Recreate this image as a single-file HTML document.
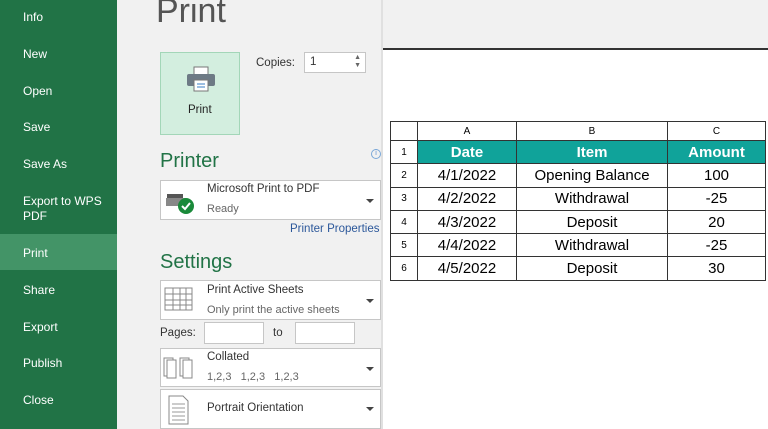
<!DOCTYPE html><html><head><meta charset="utf-8"><style>
*{margin:0;padding:0;box-sizing:border-box}
body{width:768px;height:429px;overflow:hidden;font-family:"Liberation Sans",sans-serif;background:#fff;position:relative}
.a{position:absolute}
.side{left:0;top:0;width:117px;height:429px;background:#217346}
.side div{position:absolute;left:23px;color:#fff;font-size:12px}
.mid{left:117px;top:0;width:265px;height:429px;background:#f1f1f1}
.box{position:absolute;background:#fff;border:1px solid #c6c6c6}
.arr{position:absolute;right:6px;width:0;height:0;border-left:4px solid transparent;border-right:4px solid transparent;border-top:4px solid #444}
.t{font-size:11.5px;color:#333;position:absolute}
.s{font-size:11px;color:#666;position:absolute}
table{border-collapse:collapse;position:absolute;left:390px;top:121px;font-family:"Liberation Sans",sans-serif}
td{border:1px solid #333;text-align:center;font-size:15px;color:#000;padding:0;height:23.3px}
td.h{font-size:10px;height:19px}
tr.g td.c{background:#10a39a;color:#fff;font-weight:bold}
</style></head><body>
<div class="a side">
<div style="top:10px">Info</div><div style="top:47px">New</div><div style="top:84px">Open</div><div style="top:120px">Save</div><div style="top:157px">Save As</div>
<div style="top:194px;line-height:15px">Export to WPS<br>PDF</div>
<div style="left:0;top:234px;width:117px;height:36px;background:#439467"></div>
<div style="top:246px">Print</div><div style="top:283px">Share</div><div style="top:320px">Export</div><div style="top:356px">Publish</div><div style="top:393px">Close</div>
</div>
<div class="a mid">
<div class="a" style="left:39px;top:-8px;font-size:34px;color:#555">Print</div>
<div class="a" style="left:43px;top:52px;width:80px;height:83px;background:#d3eedf;border:1px solid #a3d6b8">
<svg class="a" style="left:25px;top:13px" width="30" height="26"><rect x="8" y="1" width="14" height="8" fill="#fff" stroke="#777"/><rect x="1" y="8" width="28" height="12" rx="2" fill="#6d7a85"/><rect x="8" y="14" width="14" height="11" fill="#fff" stroke="#777"/><line x1="11" y1="18" x2="19" y2="18" stroke="#3a7cc4"/><line x1="11" y1="21" x2="19" y2="21" stroke="#3a7cc4"/></svg>
<div class="a" style="left:27px;top:51px;font-size:11.5px;color:#222">Print</div></div>
<div class="t" style="left:139px;top:57px">Copies:</div>
<div class="box" style="left:187px;top:52px;width:62px;height:21px"><span class="t" style="left:5px;top:3px">1</span><span class="a" style="right:4px;top:1px;font-size:7px;color:#666;line-height:8px">▲<br>▼</span></div>
<div class="a" style="left:43px;top:150px;font-size:20px;color:#217346">Printer</div>
<div class="a" style="left:254px;top:149px;width:10px;height:10px;border:1px solid #7aa8d8;border-radius:50%;font-size:7px;color:#5a8fd0;text-align:center;line-height:8px">i</div>
<div class="box" style="left:43px;top:180px;width:221px;height:40px">
<svg class="a" style="left:4px;top:10px" width="32" height="24"><rect x="2" y="3" width="16" height="9" fill="#555"/><rect x="1" y="7" width="20" height="8" fill="#888"/><circle cx="21" cy="15" r="8" fill="#1a8a3a"/><path d="M17 15l3 3 5-6" stroke="#fff" stroke-width="2" fill="none"/></svg>
<div class="t" style="left:46px;top:2px">Microsoft Print to PDF</div><div class="s" style="left:46px;top:22px">Ready</div><div class="arr" style="top:18px"></div></div>
<div class="a" style="left:173px;top:223px;font-size:11.5px;color:#2b579a">Printer Properties</div>
<div class="a" style="left:43px;top:251px;font-size:20px;color:#217346">Settings</div>
<div class="box" style="left:43px;top:280px;width:221px;height:40px">
<svg class="a" style="left:3px;top:6px" width="30" height="26"><g stroke="#888" fill="none"><rect x="1" y="1" width="27" height="22"/><path d="M1 7h27M1 13h27M1 18h27M9 1v22M16 1v22M22 1v22"/></g></svg>
<div class="t" style="left:46px;top:3px">Print Active Sheets</div><div class="s" style="left:46px;top:23px">Only print the active sheets</div><div class="arr" style="top:18px"></div></div>
<div class="t" style="left:43px;top:327px">Pages:</div>
<div class="box" style="left:87px;top:322px;width:60px;height:22px"></div>
<div class="t" style="left:156px;top:327px">to</div>
<div class="box" style="left:178px;top:322px;width:60px;height:22px"></div>
<div class="box" style="left:43px;top:348px;width:221px;height:39px">
<svg class="a" style="left:2px;top:8px" width="36" height="22"><g stroke="#888" fill="#fff"><rect x="1" y="1" width="9" height="18"/><rect x="4" y="3" width="9" height="18"/><rect x="17" y="1" width="9" height="18"/><rect x="20" y="3" width="9" height="18"/></g></svg>
<div class="t" style="left:46px;top:2px">Collated</div><div class="s" style="left:46px;top:22px">1,2,3 &nbsp;&nbsp;1,2,3 &nbsp;&nbsp;1,2,3</div><div class="arr" style="top:18px"></div></div>
<div class="box" style="left:43px;top:389px;width:221px;height:40px">
<svg class="a" style="left:7px;top:5px" width="22" height="30"><path d="M1 1h14l5 5v23H1z" fill="#fff" stroke="#888"/><path d="M4 9h13M4 13h13M4 17h13M4 21h13M4 25h13" stroke="#999"/></svg>
<div class="t" style="left:46px;top:12px">Portrait Orientation</div><div class="arr" style="top:17px"></div></div>
</div>
<div class="a" style="left:382px;top:0;width:386px;height:50px;background:#f1f1f1;border-bottom:2px solid #333"></div>
<div class="a" style="left:381px;top:0;width:2px;height:429px;background:#e0e0e0"></div>
<table>
<tr><td class="h" style="width:27px"></td><td class="h" style="width:99px">A</td><td class="h" style="width:151px">B</td><td class="h" style="width:98px">C</td></tr>
<tr class="g"><td class="h">1</td><td class="c">Date</td><td class="c">Item</td><td class="c">Amount</td></tr>
<tr><td class="h">2</td><td>4/1/2022</td><td>Opening Balance</td><td>100</td></tr>
<tr><td class="h">3</td><td>4/2/2022</td><td>Withdrawal</td><td>-25</td></tr>
<tr><td class="h">4</td><td>4/3/2022</td><td>Deposit</td><td>20</td></tr>
<tr><td class="h">5</td><td>4/4/2022</td><td>Withdrawal</td><td>-25</td></tr>
<tr><td class="h">6</td><td>4/5/2022</td><td>Deposit</td><td>30</td></tr>
</table>
</body></html>
